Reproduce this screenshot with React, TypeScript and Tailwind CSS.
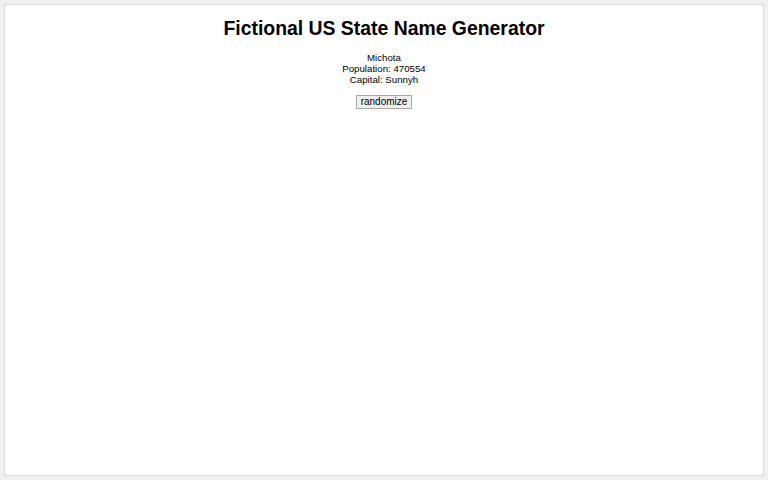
import React, { useState } from 'react';

type State = { name: string; population: number; capital: string };

const initial: State = { name: 'Michota', population: 470554, capital: 'Sunnyh' };

const parts = ['Mich', 'Ore', 'Ten', 'Ala', 'Neb', 'Ver', 'Kan', 'Ida'];
const ends = ['ota', 'gon', 'sas', 'ming', 'ania', 'ware', 'ada'];
const capitals = ['Sunnyh', 'Oakton', 'Riverd', 'Millbr', 'Ashfor', 'Pinev'];

const pick = <T,>(a: T[]) => a[Math.floor(Math.random() * a.length)];

export default function App() {
  const [state, setState] = useState<State>(initial);

  const randomize = () =>
    setState({
      name: pick(parts) + pick(ends),
      population: Math.floor(Math.random() * 900000) + 100000,
      capital: pick(capitals),
    });

  return (
    <div className="h-[480px] w-[768px] bg-[#f0f0f0] p-[4px] font-['Liberation_Sans',Arial,sans-serif] text-black">
      <div className="flex h-full flex-col items-center border border-[#dcdcdc] bg-white">
        <h1 className="mt-[9px] text-[19.4px] font-bold leading-[28px]">Fictional US State Name Generator</h1>
        <div className="mt-[10px] text-center text-[9.7px] leading-[11px]">
          <div>{state.name}</div>
          <div>Population: {state.population}</div>
          <div>Capital: {state.capital}</div>
        </div>
        <button
          onClick={randomize}
          className="mt-[10px] h-[14px] border border-[#a9a9a9] bg-[#efefef] px-[4px] text-[10px] leading-[12px]"
        >
          randomize
        </button>
      </div>
    </div>
  );
}
